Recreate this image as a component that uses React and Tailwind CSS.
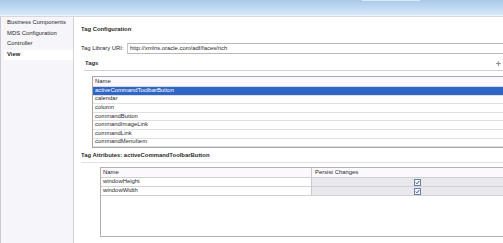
const tags = [
  "activeCommandToolbarButton",
  "calendar",
  "column",
  "commandButton",
  "commandImageLink",
  "commandLink",
  "commandMenuItem",
];

const attrs = ["windowHeight", "windowWidth"];

function Check() {
  return (
    <span className="w-[7px] h-[7px] border border-[#6f7f9f] bg-[#f4f6fb] flex items-center justify-center">
      <svg width="5" height="5" viewBox="0 0 5 5">
        <path d="M0.8 2.6 L2 3.8 L4.3 1" stroke="#2a50a8" strokeWidth="1" fill="none" />
      </svg>
    </span>
  );
}

export default function App() {
  return (
    <div
      className="w-[503px] h-[243px] bg-white overflow-hidden flex flex-col text-[5.9px] text-[#2a2a2a] leading-none"
      style={{ fontFamily: '"Liberation Sans", Arial, sans-serif' }}
    >
      <div className="h-[16px] flex-shrink-0 bg-gradient-to-b from-[#a9c8ea] to-[#d6eafa] border-b border-[#eef4fb] relative">
        <div className="absolute left-[362px] top-0 w-[58px] h-[1px] bg-[#dbe8f6]" />
      </div>
      <div className="flex flex-1 border-t border-[#d8d8dc]">
        <div className="w-[74px] flex-shrink-0 bg-[#f6f5fa] border-l border-[#c9c9cf] border-r border-r-[#d2d2d8] pt-[1px] pl-[3px]">
          <div className="h-[10.5px] flex items-center pl-[3px]">Business Components</div>
          <div className="h-[10.5px] flex items-center pl-[3px]">MDS Configuration</div>
          <div className="h-[10.5px] flex items-center pl-[3px]">Controller</div>
          <div className="h-[10.5px] flex items-center pl-[3px] bg-white font-bold">View</div>
        </div>
        <div className="flex-1 flex flex-col pl-[7px] pt-[8px]">
          <div className="font-bold h-[9px] flex items-center">Tag Configuration</div>
          <div className="flex items-center mt-[9px] h-[11px]">
            <span className="w-[46px]">Tag Library URI:</span>
            <div className="flex-1 h-[11px] border-y border-[#b8b8bc] border-l border-l-[#c8c8cc] flex items-center pl-[2px]">
              http://xmlns.oracle.com/adf/faces/rich
            </div>
          </div>
          <div className="flex items-center justify-between mt-[6px] h-[8px] pl-[4px] pr-[2px]">
            <span className="font-bold">Tags</span>
            <span className="text-[#8a8a8a] text-[9px] font-bold">+</span>
          </div>
          <div className="ml-[3px] mt-[2px] border-t border-[#d0d0d4]" />
          <div className="ml-[11px] mt-[5px] border border-[#a8a8ac] border-r-0">
            <div className="h-[10px] flex items-center pl-[2px] bg-[#fbf9fd] border-b border-[#d8d8dc]">Name</div>
            {tags.map((t, i) => (
              <div
                key={t}
                className={`h-[8.6px] flex items-center pl-[2px] border-b border-[#e2dfe4] ${
                  i === 0 ? "bg-[#2e65c6] text-white" : "bg-white"
                }`}
              >
                {t}
              </div>
            ))}
          </div>
          <div className="font-bold mt-[4px] h-[8px] flex items-center">Tag Attributes: activeCommandToolbarButton</div>
          <div className="mt-[2px] border-t border-[#e0dfe4]" />
          <div className="ml-[19px] mt-[4px] h-[70px] border border-[#b0b0b4] border-r-0">
            <div className="flex h-[10px] border-b border-[#d0d0d4] bg-[#fbf9fd]">
              <div className="w-[211px] pl-[2px] flex items-center border-r border-[#c8c8cc]">Name</div>
              <div className="flex-1 pl-[3px] flex items-center">Persist Changes</div>
            </div>
            {attrs.map((a) => (
              <div key={a} className="flex h-[9px] border-b border-[#d2d0d6]">
                <div className="w-[211px] pl-[2px] flex items-center border-r border-[#c8c8cc] bg-white">{a}</div>
                <div className="flex-1 bg-[#e9e8ed] flex items-center pl-[102px]">
                  <Check />
                </div>
              </div>
            ))}
          </div>
        </div>
      </div>
    </div>
  );
}
